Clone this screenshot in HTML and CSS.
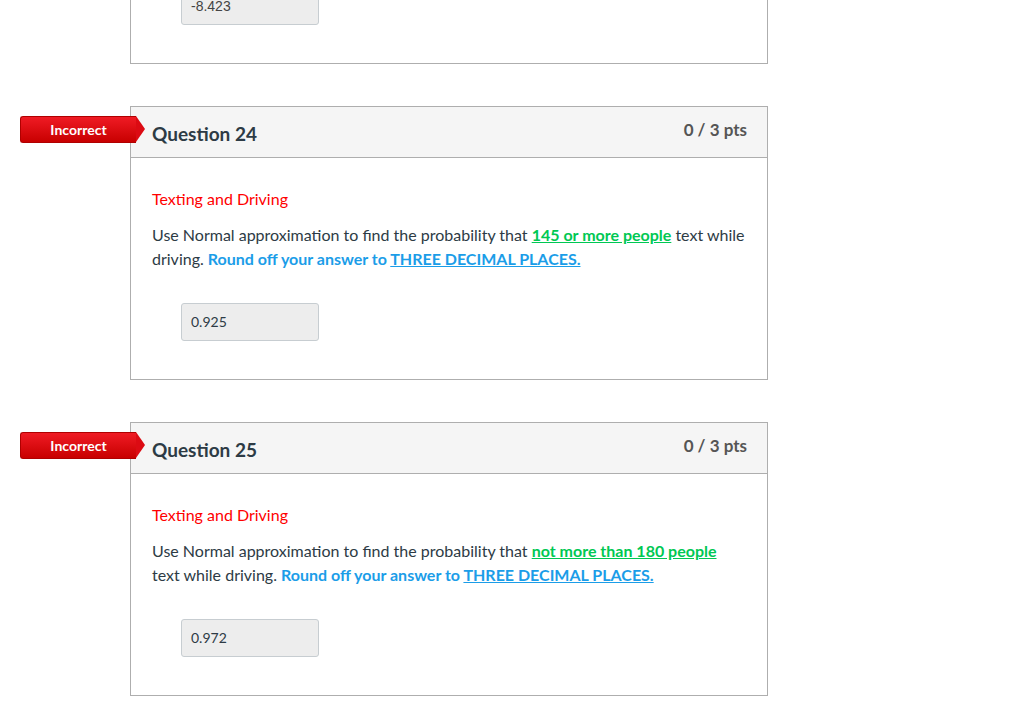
FILE: index.html
```html
<!DOCTYPE html>
<html>
<head>
<meta charset="utf-8">
<link rel="stylesheet" href="styles.css">
</head>
<body>
<div class="quiz">
  <div class="card card-first">
    <div class="body body-first">
      <div class="answer answer-arial">-8.423</div>
    </div>
  </div>

  <div class="card">
    <div class="badge">Incorrect</div>
    <div class="header">
      <span class="title">Question 24</span>
      <span class="pts">0 / 3 pts</span>
    </div>
    <div class="body">
      <p class="topic">Texting and Driving</p>
      <p class="text">Use Normal approximation to find the probability that <span class="green">145 or more people</span> text while driving. <span class="blue">Round off your answer to <u>THREE DECIMAL PLACES.</u></span></p>
      <div class="answer">0.925</div>
    </div>
  </div>

  <div class="card">
    <div class="badge">Incorrect</div>
    <div class="header">
      <span class="title">Question 25</span>
      <span class="pts">0 / 3 pts</span>
    </div>
    <div class="body">
      <p class="topic">Texting and Driving</p>
      <p class="text">Use Normal approximation to find the probability that <span class="green">not more than 180 people</span> text while driving. <span class="blue">Round off your answer to <u>THREE DECIMAL PLACES.</u></span></p>
      <div class="answer">0.972</div>
    </div>
  </div>
</div>
</body>
</html>
```
FILE: styles.css
```css
html, body {
  margin: 0;
  padding: 0;
  background: #fff;
  overflow: hidden;
}
body {
  font-family: Lato, "Open Sans", sans-serif;
  color: #2d3b45;
  width: 1012px;
  height: 726px;
}
.quiz {
  margin-left: 130px;
  width: 638px;
}
.card {
  position: relative;
  border: 1px solid #aeaeae;
  margin-bottom: 42px;
  box-sizing: border-box;
}
.card-first {
  margin-top: -34px;
}
.header {
  display: flex;
  justify-content: space-between;
  align-items: flex-start;
  height: 51px;
  box-sizing: border-box;
  background: #f5f5f5;
  border-bottom: 1px solid #aeaeae;
  padding: 0 20px 0 21px;
}
.title {
  font-size: 19px;
  font-weight: 700;
  line-height: 24px;
  margin-top: 15px;
  color: #2d3b45;
}
.pts {
  font-size: 17px;
  font-weight: 700;
  line-height: 24px;
  margin-top: 11px;
  color: #555;
}
.body {
  padding: 29px 20px 38px 21px;
}
.body-first {
  padding-top: 20px;
}
.topic {
  margin: 0 0 12px;
  font-size: 16px;
  line-height: 24px;
  color: #f00;
}
.text {
  margin: 0 0 32px;
  font-size: 16px;
  line-height: 24px;
  color: #2d3b45;
}
.green {
  color: #00c853;
  font-weight: 700;
  text-decoration: underline;
}
.blue {
  color: #1b9de8;
  font-weight: 700;
}
.blue u {
  text-decoration: underline;
}
.answer {
  margin-left: 29px;
  width: 138px;
  height: 38px;
  box-sizing: border-box;
  background: #ededed;
  border: 1px solid #c7cdd1;
  border-radius: 3px;
  padding: 0 9px;
  font-size: 14px;
  line-height: 36px;
  color: #2d3b45;
}
.answer-arial {
  font-family: "Liberation Sans", Arial, sans-serif;
  color: #444;
}
.badge {
  position: absolute;
  left: -111px;
  top: 9px;
  width: 116px;
  height: 27px;
  box-sizing: border-box;
  background: linear-gradient(#ef1b24, #c80000);
  border: 1px solid #b00000;
  border-right: none;
  border-radius: 3px 0 0 3px;
  color: #fff;
  font-size: 14px;
  font-weight: 700;
  line-height: 25px;
  text-align: center;
  z-index: 2;
}
.badge::after {
  content: "";
  position: absolute;
  right: -9px;
  top: -1px;
  width: 0;
  height: 0;
  border-top: 13.5px solid transparent;
  border-bottom: 13.5px solid transparent;
  border-left: 9px solid #dc0b13;
}
```
